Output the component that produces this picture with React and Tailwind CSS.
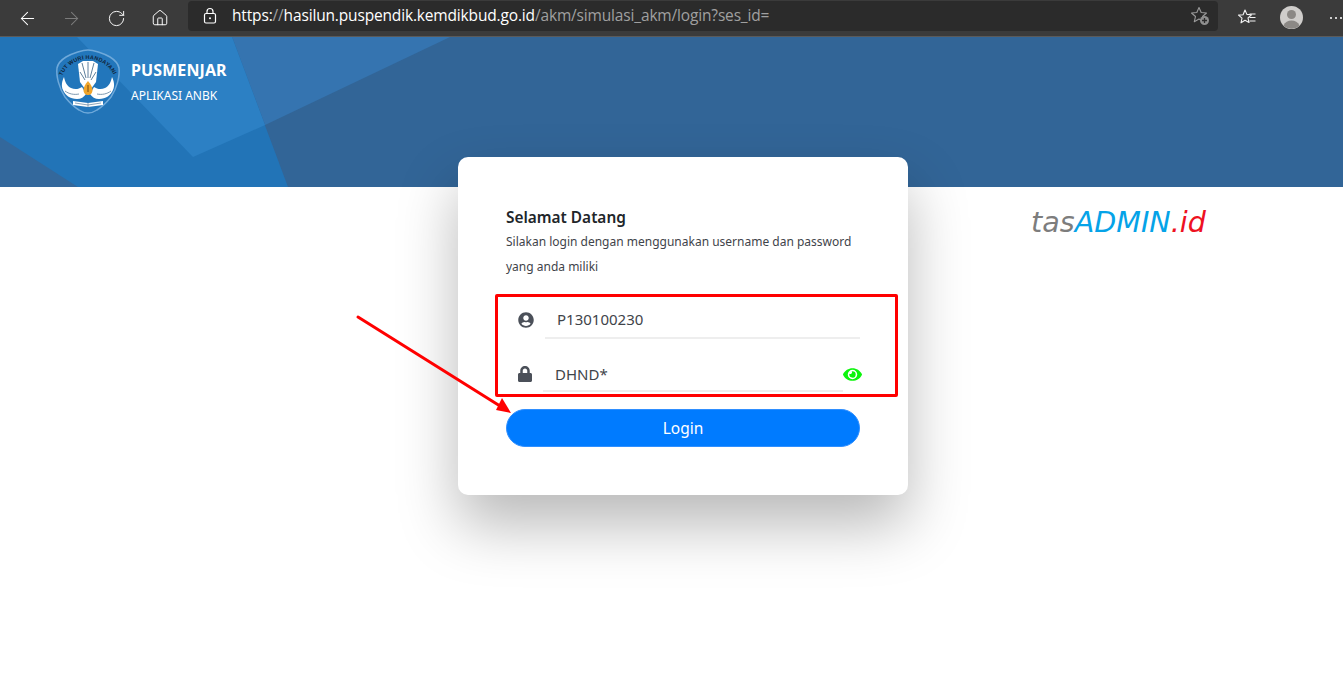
import { ArrowLeft, ArrowRight, RotateCw, Home } from "lucide-react";
import { FaUserCircle, FaLock, FaEye } from "react-icons/fa";

/* ================= BROWSER BAR ================= */

const StarPlus = () => (
  <svg width="22" height="22" viewBox="0 0 22 22" fill="none">
    <path
      d="M10 2.5l2.2 5 5.3.5-4 3.5 1.2 5.2L10 14l-4.700 2.700 1.200-5.200-4-3.500 5.300-.500z"
      stroke="#9a9a9a"
      strokeWidth="1.100"
      strokeLinejoin="round"
    />
    <circle cx="15.500" cy="15.500" r="4.500" fill="#8f8f8f" />
    <path d="M15.500 13v5M13 15.500h5" stroke="#2b2b2b" strokeWidth="1.300" />
  </svg>
);

const StarList = () => (
  <svg width="20" height="20" viewBox="0 0 20 20" fill="none">
    <path
      d="M8 2l1.900 4.400 4.600.400-3.500 3 1 4.700L8 12.200l-4 2.600 1-4.700-3.500-3 4.600-.400z"
      stroke="#f2f2f2"
      strokeWidth="1.100"
      strokeLinejoin="round"
    />
    <path d="M12.500 6h6M12.500 9.500h6M12.500 13h6" stroke="#f2f2f2" strokeWidth="1.100" />
  </svg>
);

const Avatar = () => (
  <svg width="23" height="23" viewBox="0 0 23 23">
    <circle cx="11.500" cy="11.500" r="11.500" fill="#cfcdcb" />
    <circle cx="11.500" cy="8.500" r="4.500" fill="#8b8885" />
    <path d="M3.500 19.500c1.500-3.500 4.500-5 8-5s6.500 1.500 8 5a11.500 11.500 0 0 1-16 0z" fill="#8b8885" />
  </svg>
);

const BrowserBar = () => (
  <div className="h-[37px] shrink-0 flex items-center bg-[#3b3b3b] border-b border-[#5a5a5a]">
    <div className="w-[188px] pl-[17px] flex items-center shrink-0">
      <ArrowLeft size={21} strokeWidth={1.200} className="text-white" />
      <ArrowRight size={21} strokeWidth={1.200} className="ml-[23px] text-[#7c7c7c]" />
      <RotateCw size={19} strokeWidth={1.200} className="ml-[25px] text-white" />
      <Home size={18} strokeWidth={1.300} className="ml-[25px] text-white" />
    </div>
    <div className="w-[1030px] h-[30px] -mt-[5px] rounded-[4px] bg-[#2b2b2b] flex items-center shrink-0">
      <svg width="14" height="18" viewBox="0 0 14 18" fill="none" className="ml-[15px]">
        <path d="M4 7V4.500a3 3 0 0 1 6 0V7" stroke="#fff" strokeWidth="1.200" />
        <rect x="1.500" y="6.500" width="11" height="9.500" rx="1.500" stroke="#fff" strokeWidth="1.200" />
        <circle cx="7" cy="11.300" r="1" fill="#fff" />
      </svg>
      <div className="ml-[15px] text-[15.500px] tracking-[-0.16px] whitespace-nowrap font-['Open_Sans',sans-serif] text-[#a0a0a0]">
        <span className="text-white">https:</span>
        //
        <span className="text-white">hasilun.puspendik.kemdikbud.go.id</span>
        /akm/simulasi_akm/login?ses_id=
      </div>
      <div className="ml-auto mr-[7px] flex">
        <StarPlus />
      </div>
    </div>
    <div className="flex-1 flex items-center -mt-[1px]">
      <div className="ml-[19px] flex">
        <StarList />
      </div>
      <div className="ml-[23px] flex">
        <Avatar />
      </div>
      <div className="ml-[27px] flex gap-[3px]">
        <span className="w-[2px] h-[2px] bg-white rounded-full" />
        <span className="w-[2px] h-[2px] bg-white rounded-full" />
        <span className="w-[2px] h-[2px] bg-white rounded-full" />
      </div>
    </div>
  </div>
);

/* ================= LOGO ================= */

const Logo = () => (
  <svg width="66" height="66" viewBox="0 0 66 66" className="shrink-0">
    <defs>
      <path id="logo-arc" d="M7 27A28.400 28.400 0 0 1 59 27" />
    </defs>
    <path
      d="M33 1c5 0 15 3 22 7 4 2.500 8 6 9 11 1 8-2 20-8 29-4 5-9 10-14 13-3 2-6 3-9 3s-6-1-9-3c-5-3-10-8-14-13C4 39 1 27 2 19c1-5 5-8.500 9-11 7-4 17-7 22-7z"
      fill="#2276bb"
      stroke="#6fa9da"
      strokeWidth="1.500"
    />
    <text fontSize="5.500" fontWeight="700" fill="#10243a" fontFamily="Liberation Sans, sans-serif">
      <textPath href="#logo-arc" startOffset="0" textLength="64">
        TUT WURI HANDAYANI
      </textPath>
    </text>
    {/* blangkon */}
    <path d="M23 15l5-3h10l5 3-2 18-5 7h-6l-5-7z" fill="#fff" />
    <path d="M27 14l4 15M33 13v16M39 14l-4 15M25 23l5 8M41 23l-5 8" stroke="#5e7f9c" strokeWidth="1" />
    {/* wings */}
    <path d="M9 28c-2 4-3 9-1 13 2 5 7 9 14 9 4 0 7-2 9-5l-4-7c-3 2-7 3-11 1-4-2-6-6-7-11z" fill="#fff" />
    <path d="M57 28c2 4 3 9 1 13-2 5-7 9-14 9-4 0-7-2-9-5l4-7c3 2 7 3 11 1 4-2 6-6 7-11z" fill="#fff" />
    <path d="M10 42c4 3 9 4 14 3M56 42c-4 3-9 4-14 3" stroke="#5e7f9c" strokeWidth=".8" fill="none" />
    {/* flame */}
    <path d="M33 32c2.500 3 4.500 6 4.500 9s-2 5-4.500 5-4.500-2-4.500-5 2-6 4.500-9z" fill="#f0a52b" />
    <path d="M33 36v7" stroke="#7a4b0c" strokeWidth="1" />
    {/* book */}
    <path d="M18 52l15 2 15-2v4l-15 2-15-2z" fill="#fff" />
    <path d="M33 54v4M20 54l13 2 13-2" stroke="#5e7f9c" strokeWidth=".7" fill="none" />
  </svg>
);

/* ================= BANNER ================= */

const Banner = () => (
  <div className="relative h-[150px] shrink-0 bg-[#326597] overflow-hidden">
    <svg className="absolute inset-0 w-full h-full" viewBox="0 0 1343 150" preserveAspectRatio="none">
      <polygon points="232,0 265,88 450,0" fill="#3574b0" />
      <polygon points="0,0 232,0 288,150 0,150" fill="#2274b7" />
      <polygon points="77,0 193,120 265,88 232,0" fill="#2c80c4" />
      <polygon points="0,100 78,150 0,150" fill="#33689c" />
    </svg>
    <div className="relative flex items-start pl-[55px] pt-[12px] text-white">
      <Logo />
      <div className="ml-[10px] pt-[11px]">
        <div className="text-[16px] leading-[20px] font-bold tracking-[0.1px]">PUSMENJAR</div>
        <div className="mt-[6px] text-[12px] leading-[20px]">APLIKASI ANBK</div>
      </div>
    </div>
  </div>
);

/* ================= LOGIN CARD ================= */

const LoginCard = () => (
  <div className="relative z-10 w-[450px] h-[338px] -mt-[30px] ml-[458px] rounded-[10px] bg-white px-[48px] pt-[50px] shadow-[0_30px_60px_rgba(0,0,0,0.28)]">
    <h1 className="text-[15.400px] leading-[22px] font-semibold text-[#212529]">Selamat Datang</h1>
    <p className="text-[12px] leading-[25px] text-[#3f444a] whitespace-nowrap">
      Silakan login dengan menggunakan username dan password
      <br />
      yang anda miliki
    </p>

    <div className="mt-[21px] flex items-center h-[39px]">
      <FaUserCircle size={16} className="ml-[12px] text-[#4b5059] shrink-0" />
      <div className="ml-[11px] flex-1 h-[39px] pl-[12px] pt-[2px] flex items-center border-b-2 border-[#eeeeee] text-[15px] text-[#3f444a]">
        P130100230
      </div>
    </div>

    <div className="mt-[19px] flex items-center h-[34px]">
      <FaLock size={16} className="ml-[11px] -mt-[2px] text-[#4b5059] shrink-0" />
      <div className="ml-[10px] w-[300px] h-[34px] pl-[12px] flex items-center border-b-2 border-[#eeeeee] text-[15px] text-[#3f444a] shrink-0">
        DHND*
      </div>
      <FaEye size={19} className="-mt-[2px] text-[#0cf50c] shrink-0" />
    </div>

    <button className="mt-[17px] w-full h-[38px] pt-[2px] rounded-full bg-[#007bff] border border-[#2f8fff] text-white text-[15.500px]">
      Login
    </button>
  </div>
);

/* ================= APP ================= */

const App = () => (
  <div className="relative h-screen overflow-hidden flex flex-col bg-white font-['Noto_Sans',sans-serif]">
    <BrowserBar />
    <Banner />
    <LoginCard />

    {/* annotations over the screenshot */}
    <div className="absolute z-20 left-[1031px] top-[205px] text-[28.600px] leading-[34px] italic whitespace-nowrap font-['DejaVu_Sans',sans-serif]">
      <span className="text-[#7d7d7d]">tas</span>
      <span className="text-[#05a3e8]">ADMIN</span>
      <span className="text-[#ee1122]">.id</span>
    </div>
    <div className="absolute z-20 left-[495px] top-[294px] w-[403px] h-[103px] border-[3px] border-[#ff0000] rounded-[2px]" />
    <svg className="absolute z-20 left-[350px] top-[310px]" width="170" height="115" viewBox="0 0 170 115">
      <path d="M8 7L150 96" stroke="#ff0000" strokeWidth="3" strokeLinecap="round" />
      <polygon points="161,103 146,100 152,88" fill="#ff0000" />
    </svg>
  </div>
);

export default App;
